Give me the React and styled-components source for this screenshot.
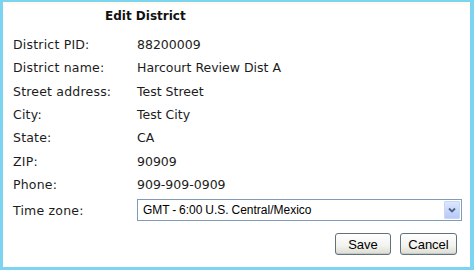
import React from "react";
import styled, { createGlobalStyle } from "styled-components";

const Global = createGlobalStyle`
  html, body { margin: 0; padding: 0; background: #ffffff; }
  * { box-sizing: border-box; }
`;

const Frame = styled.div`
  width: 474px;
  height: 270px;
  border-style: solid;
  border-color: #7dd4f1;
  border-width: 2px 4px 3px 3px;
  background: linear-gradient(#fffbea 0px, #ffffff 4px);
  display: flex;
  flex-direction: column;
  font-family: "DejaVu Sans", Verdana, sans-serif;
  font-size: 12.5px;
  color: #1c1c1c;
`;

const Title = styled.div`
  height: 28px;
  line-height: 28px;
  font-weight: bold;
  font-size: 12px;
  padding-left: 102px;
  color: #111;
`;

const Fields = styled.div`
  display: grid;
  grid-template-columns: 124px 1fr;
  grid-auto-rows: 23.33px;
  align-items: center;
  padding-left: 10px;
  margin-top: 3px;
`;

const Label = styled.div`
  white-space: nowrap;
  letter-spacing: 0.2px;
`;

const Value = styled.div`
  white-space: nowrap;
`;

const ZoneRow = styled.div`
  display: grid;
  grid-template-columns: 124px 325px;
  align-items: center;
  height: 28px;
  padding-left: 10px;
`;

const Select = styled.div`
  height: 22px;
  border: 1px solid #7f9db9;
  background: #fff;
  display: flex;
  align-items: center;
  justify-content: space-between;
  font-family: "Liberation Sans", Arial, sans-serif;
  font-size: 12px;
  word-spacing: -0.5px;
  color: #000;
  padding: 1px 1px 1px 5px;
`;

const ArrowBox = styled.div`
  width: 16px;
  height: 18px;
  border: 1px solid #c9d6f8;
  border-radius: 1px;
  background: linear-gradient(#dce6fd, #b8c9f6);
  display: flex;
  align-items: center;
  justify-content: center;
`;

const Buttons = styled.div`
  display: flex;
  justify-content: flex-end;
  gap: 9px;
  padding-right: 13px;
  margin-top: 9px;
`;

const Button = styled.div`
  height: 22px;
  min-width: ${(p) => p.$w}px;
  border: 1px solid #5f7280;
  border-radius: 3px;
  background: linear-gradient(#ffffff, #f2f2ee 60%, #dcdcd4);
  box-shadow: inset 0 -1px 0 #c8c8c0;
  font-family: "Liberation Sans", Arial, sans-serif;
  font-size: 13px;
  color: #000;
  display: flex;
  align-items: center;
  justify-content: center;
`;

const rows = [
  ["District PID:", "88200009"],
  ["District name:", "Harcourt Review Dist A"],
  ["Street address:", "Test Street"],
  ["City:", "Test City"],
  ["State:", "CA"],
  ["ZIP:", "90909"],
  ["Phone:", "909-909-0909"],
];

export default function App() {
  return (
    <>
      <Global />
      <Frame>
        <Title>Edit District</Title>
        <Fields>
          {rows.map(([l, v]) => (
            <React.Fragment key={l}>
              <Label>{l}</Label>
              <Value>{v}</Value>
            </React.Fragment>
          ))}
        </Fields>
        <ZoneRow>
          <Label>Time zone:</Label>
          <Select>
            <span>GMT - 6:00 U.S. Central/Mexico</span>
            <ArrowBox>
              <svg width="8" height="6" viewBox="0 0 8 6">
                <path d="M1 1.5 L4 4.5 L7 1.5" fill="none" stroke="#4d6185" strokeWidth="1.8" />
              </svg>
            </ArrowBox>
          </Select>
        </ZoneRow>
        <Buttons>
          <Button $w={56}>Save</Button>
          <Button $w={57}>Cancel</Button>
        </Buttons>
      </Frame>
    </>
  );
}
